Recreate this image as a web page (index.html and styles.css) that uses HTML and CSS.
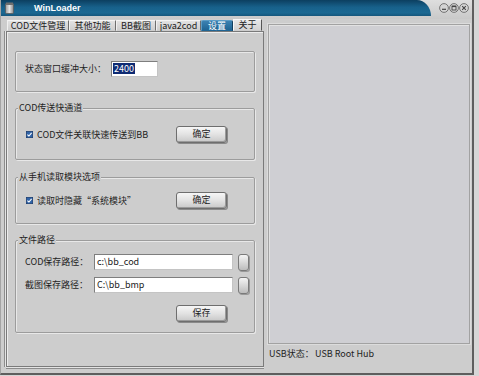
FILE: index.html
```html
<!DOCTYPE html>
<html>
<head>
<meta charset="utf-8">
<title>WinLoader</title>
<link rel="stylesheet" href="styles.css">
</head>
<body>
<div class="window">
  <div class="titlebar">
    <div class="caption">
      <svg class="appicon" width="9" height="12" viewBox="0 0 9 12">
        <defs><linearGradient id="ig" x1="0" x2="1"><stop offset="0" stop-color="#9a9a9a"/><stop offset="0.5" stop-color="#e4e4e4"/><stop offset="1" stop-color="#8a8a8a"/></linearGradient></defs>
        <rect x="0.5" y="1.5" width="8" height="10" rx="1" fill="url(#ig)" stroke="#5c5c5c" stroke-width="0.8"/>
        <rect x="1" y="0.5" width="7" height="2.5" fill="#6e6e6e"/>
      </svg>
      <span class="title">WinLoader</span>
    </div>
    <div class="controls">
      <svg class="ctl" width="10" height="10" viewBox="0 0 10 10"><circle cx="5" cy="5" r="4.4" fill="#d4d4d4" stroke="#6a6a6a" stroke-width="0.9"/><path d="M3 6.3H7" stroke="#444" stroke-width="1.2"/></svg>
      <svg class="ctl" width="10" height="10" viewBox="0 0 10 10"><circle cx="5" cy="5" r="4.4" fill="#d4d4d4" stroke="#6a6a6a" stroke-width="0.9"/><rect x="3" y="3" width="4" height="4" fill="none" stroke="#444" stroke-width="0.9"/><path d="M3 3.5H7" stroke="#444" stroke-width="1.2"/></svg>
      <svg class="ctl" width="10" height="10" viewBox="0 0 10 10"><circle cx="5" cy="5" r="4.4" fill="#d4d4d4" stroke="#6a6a6a" stroke-width="0.9"/><path d="M3.2 3.2L6.8 6.8M6.8 3.2L3.2 6.8" stroke="#444" stroke-width="1.1"/></svg>
    </div>
  </div>
  <div class="main">
    <div class="left">
      <div class="tabs">
        <div class="tab w1">COD文件管理</div>
        <div class="tab w2">其他功能</div>
        <div class="tab w3">BB截图</div>
        <div class="tab w4">java2cod</div>
        <div class="tab w5 active">设置</div>
        <div class="tab w6 raised">关于</div>
      </div>
      <div class="panel">
        <div class="group g1">
          <div class="row">
            <span class="lbl lbl1">状态窗口缓冲大小：</span>
            <div class="input in1"><span class="sel">2400</span></div>
          </div>
        </div>
        <div class="group g2">
          <span class="legend">COD传送快通道</span>
          <div class="row">
            <div class="check-label">
              <svg class="check" width="7" height="7" viewBox="0 0 7 7"><rect x="0.4" y="0.4" width="6.2" height="6.2" fill="#2f63a8" stroke="#1d3f72" stroke-width="0.8"/><path d="M1.4 3.6L2.9 5L5.6 1.9" fill="none" stroke="#fff" stroke-width="1.1"/></svg>
              <span>COD文件关联快速传送到BB</span>
            </div>
            <div class="btn">确定</div>
          </div>
        </div>
        <div class="group g3">
          <span class="legend">从手机读取模块选项</span>
          <div class="row">
            <div class="check-label">
              <svg class="check" width="7" height="7" viewBox="0 0 7 7"><rect x="0.4" y="0.4" width="6.2" height="6.2" fill="#2f63a8" stroke="#1d3f72" stroke-width="0.8"/><path d="M1.4 3.6L2.9 5L5.6 1.9" fill="none" stroke="#fff" stroke-width="1.1"/></svg>
              <span>读取时隐藏“系统模块”</span>
            </div>
            <div class="btn">确定</div>
          </div>
        </div>
        <div class="group g4">
          <span class="legend">文件路径</span>
          <div class="row prow">
            <span class="lbl lbl4">COD保存路径：</span>
            <div class="input in4">c:\bb_cod</div>
            <div class="browse"></div>
          </div>
          <div class="row prow r2">
            <span class="lbl lbl4">截图保存路径：</span>
            <div class="input in4">C:\bb_bmp</div>
            <div class="browse"></div>
          </div>
          <div class="row saverow">
            <div class="btn">保存</div>
          </div>
        </div>
      </div>
    </div>
    <div class="right">
      <div class="listbox"></div>
      <div class="status"><span class="st1">USB状态：</span><span>USB Root Hub</span></div>
    </div>
  </div>
</div>
</body>
</html>
```

FILE: styles.css
```css
* { box-sizing: border-box; }
body {
  margin: 0;
  background: #d6d6d6;
  font-family: "Noto Sans CJK SC", "Liberation Sans", sans-serif;
  font-size: 9px;
  color: #1e1e1e;
}
.window {
  width: 474px;
  height: 375px;
  background: #cdcdcd;
  border-left: 1px solid #a4a4a4;
  border-right: 2px solid #5e5e5e;
  border-bottom: 2px solid #5e5e5e;
  display: flex;
  flex-direction: column;
}
.titlebar {
  height: 19px;
  display: flex;
  background: linear-gradient(#dedede, #c9c9c9);
  flex-shrink: 0;
}
.caption {
  width: 430px;
  height: 16px;
  background: linear-gradient(#0c3f60, #18618b 45%, #1b6892 80%, #15567c);
  border-top-right-radius: 14px 16px;
  display: flex;
  align-items: center;
  padding-left: 4px;
}
.appicon { display: block; }
.title {
  margin-left: 20px;
  color: #ffffff;
  font-family: "Liberation Sans", sans-serif;
  font-weight: bold;
  font-size: 9px;
  line-height: 12px;
}
.controls {
  flex: 1;
  display: flex;
  justify-content: flex-end;
  align-items: flex-start;
  padding-top: 3px;
  padding-right: 3px;
}
.ctl { display: block; }
.main {
  flex: 1;
  display: flex;
}
.left {
  margin-left: 5px;
  width: 258px;
  display: flex;
  flex-direction: column;
}
.tabs {
  height: 12px;
  display: flex;
  padding-left: 1px;
  align-items: flex-end;
}
.tab {
  height: 11px;
  line-height: 9px;
  text-align: center;
  white-space: nowrap;
  background: linear-gradient(#e2e2e2, #cfcfcf);
  border: 1px solid;
  border-color: #f4f4f4 #6e6e6e #cdcdcd #f0f0f0;
  font-size: 9px;
  color: #222;
}
.w1 { width: 62px; }
.w2 { width: 47px; }
.w3 { width: 40px; }
.w4 { width: 45px; }
.w5 { width: 32px; }
.w6 { width: 29px; }
.tab.active {
  background: linear-gradient(#3c82b2, #1f6594);
  border-color: #5b9cc6 #123f5e #1f6594 #5b9cc6;
  color: #ffffff;
  border-radius: 2px 2px 0 0;
}
.tab.raised {
  height: 12px;
  border-color: #f8f8f8 #555 #cdcdcd #f8f8f8;
  background: linear-gradient(#e8e8e8, #d2d2d2);
}
.panel {
  height: 336px;
  border: 1px solid #7a7a7a;
  box-shadow: inset 1px 1px 0 #ececec, -1px 0 0 #e4e4e4, -2px 0 0 #8c8c8c, 0 1px 0 #e4e4e4, 0 2px 0 #8c8c8c;
  padding: 19px 8px 0 8px;
  display: flex;
  flex-direction: column;
}
.group {
  position: relative;
  width: 240px;
  border: 1px solid #9c9c9c;
  border-radius: 2px;
  box-shadow: inset 1px 1px 0 #e8e8e8, 1px 1px 0 #e8e8e8;
  padding-left: 9px;
}
.g1 { height: 41px; padding-top: 9px; }
.g2 { height: 52px; padding-top: 17px; margin-top: 16px; }
.g3 { height: 47px; padding-top: 14px; margin-top: 17px; }
.g4 { height: 93px; padding-top: 13px; margin-top: 16px; }
.legend {
  position: absolute;
  top: -7px;
  left: 2px;
  padding: 0 1px;
  background: #cdcdcd;
  line-height: 12px;
  font-size: 9px;
}
.row {
  display: flex;
  align-items: center;
}
.lbl { line-height: 16px; white-space: nowrap; }
.lbl1 { width: 86px; }
.lbl4 { width: 69px; }
.input {
  height: 16px;
  background: #ffffff;
  border: 1px solid;
  border-color: #7e7e7e #c4c4c4 #c4c4c4 #7e7e7e;
  line-height: 14px;
  padding-left: 2px;
  font-size: 9px;
  white-space: nowrap;
  color: #1a1a1a;
}
.in1 { width: 47px; padding-left: 1px; }
.sel {
  background: #0f2b73;
  color: #ffffff;
  display: inline-block;
  line-height: 11px;
  padding: 0 1px;
}
.in4 { width: 139px; }
.check-label {
  width: 151px;
  display: flex;
  align-items: center;
  white-space: nowrap;
}
.check { display: block; margin-left: 1px; margin-right: 4px; }
.btn {
  width: 51px;
  height: 17px;
  border: 1px solid #6e6e6e;
  border-radius: 3px;
  background: linear-gradient(#f6f6f6, #e2e2e2 50%, #c8c8c8);
  box-shadow: inset -1px -1px 0 #9a9a9a, 1px 1px 0 #8a8a8a;
  text-align: center;
  line-height: 14px;
  font-size: 9px;
  color: #222;
}
.prow { align-items: flex-start; height: 17px; }
.prow .lbl { line-height: 16px; }
.r2 { margin-top: 6px; }
.browse {
  width: 11px;
  height: 17px;
  margin-left: 5px;
  border: 1px solid #7a7a7a;
  border-radius: 3px;
  background: linear-gradient(#f4f4f4, #d8d8d8 50%, #bcbcbc);
  box-shadow: 1px 1px 0 #999;
}
.saverow { margin-top: 11px; padding-left: 151px; }
.right {
  margin-left: 4px;
  width: 202px;
  display: flex;
  flex-direction: column;
}
.listbox {
  margin-top: 5px;
  height: 320px;
  background: #cfcfd3;
  border: 1px solid #a2a2a2;
  box-shadow: inset 1px 1px 0 #e2e2e2, 0 0 0 1px #dcdcdc;
}
.status {
  margin-top: 2px;
  height: 16px;
  line-height: 16px;
  padding-left: 1px;
  white-space: nowrap;
  font-size: 9px;
}
.st1 { display: inline-block; width: 46px; }
```
